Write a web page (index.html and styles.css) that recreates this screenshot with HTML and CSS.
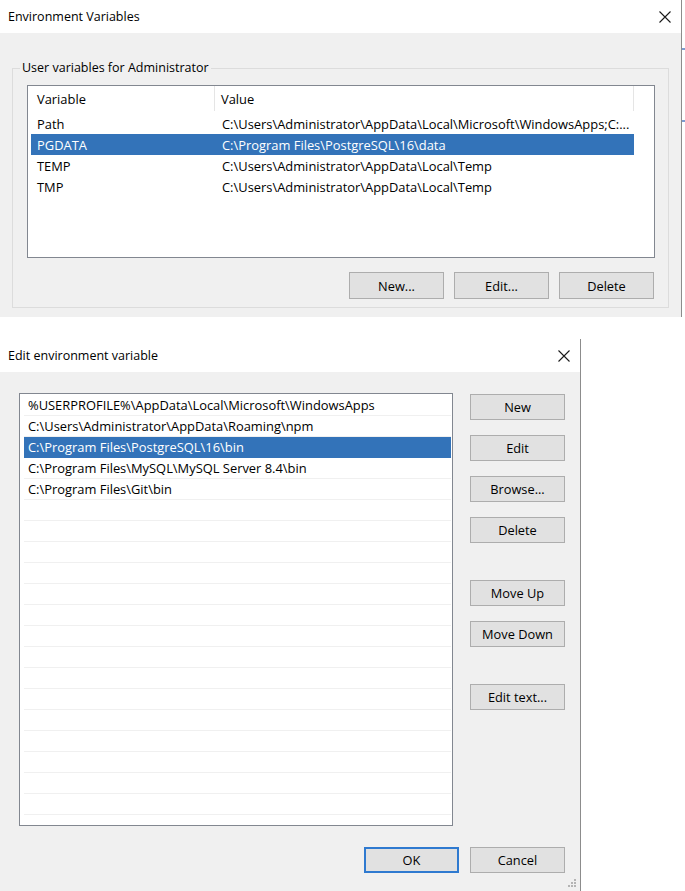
FILE: index.html
```html
<!DOCTYPE html>
<html lang="en">
<head>
<meta charset="utf-8">
<title>Environment Variables</title>
<link rel="stylesheet" href="styles.css">
</head>
<body>
<div class="screen">
  <div class="top-area">
    <section class="dlg dlg-env">
      <header class="titlebar">
        <span class="title">Environment Variables</span>
        <svg class="close" width="12" height="12" viewBox="0 0 12 12"><path d="M0.5 0.5 L11.5 11.5 M11.5 0.5 L0.5 11.5" stroke="#1a1a1a" stroke-width="1.1" fill="none"/></svg>
      </header>
      <div class="dlg-body env-body">
        <fieldset class="group">
          <legend>User variables for Administrator</legend>
          <div class="listview">
            <div class="lv-head">
              <div class="lv-col col-var">Variable</div>
              <div class="lv-col col-val">Value</div>
              <div class="lv-col col-rest"></div>
            </div>
            <div class="lv-row"><span class="col-var">Path</span><span class="col-val">C:\Users\Administrator\AppData\Local\Microsoft\WindowsApps;C:...</span></div>
            <div class="lv-row selected"><span class="col-var">PGDATA</span><span class="col-val">C:\Program Files\PostgreSQL\16\data</span></div>
            <div class="lv-row"><span class="col-var">TEMP</span><span class="col-val">C:\Users\Administrator\AppData\Local\Temp</span></div>
            <div class="lv-row"><span class="col-var">TMP</span><span class="col-val">C:\Users\Administrator\AppData\Local\Temp</span></div>
          </div>
          <div class="btn-row">
            <button class="btn">New...</button>
            <button class="btn">Edit...</button>
            <button class="btn">Delete</button>
          </div>
        </fieldset>
      </div>
    </section>
    <div class="bg-window">
      <span class="mark mark-1"></span>
      <span class="mark mark-2"></span>
    </div>
  </div>

  <section class="dlg dlg-edit">
    <header class="titlebar">
      <span class="title">Edit environment variable</span>
      <svg class="close" width="12" height="12" viewBox="0 0 12 12"><path d="M0.5 0.5 L11.5 11.5 M11.5 0.5 L0.5 11.5" stroke="#1a1a1a" stroke-width="1.1" fill="none"/></svg>
    </header>
    <div class="dlg-body edit-body">
      <div class="listbox">
        <div class="lb-row">%USERPROFILE%\AppData\Local\Microsoft\WindowsApps</div>
        <div class="lb-row">C:\Users\Administrator\AppData\Roaming\npm</div>
        <div class="lb-row selected">C:\Program Files\PostgreSQL\16\bin</div>
        <div class="lb-row">C:\Program Files\MySQL\MySQL Server 8.4\bin</div>
        <div class="lb-row">C:\Program Files\Git\bin</div>
        <div class="lb-row"></div>
        <div class="lb-row"></div>
        <div class="lb-row"></div>
        <div class="lb-row"></div>
        <div class="lb-row"></div>
        <div class="lb-row"></div>
        <div class="lb-row"></div>
        <div class="lb-row"></div>
        <div class="lb-row"></div>
        <div class="lb-row"></div>
        <div class="lb-row"></div>
        <div class="lb-row"></div>
        <div class="lb-row"></div>
        <div class="lb-row"></div>
        <div class="lb-row"></div>
        <div class="lb-row"></div>
      </div>
      <div class="side-buttons">
        <button class="btn">New</button>
        <button class="btn">Edit</button>
        <button class="btn">Browse...</button>
        <button class="btn">Delete</button>
        <button class="btn gap-before">Move Up</button>
        <button class="btn">Move Down</button>
        <button class="btn gap-before">Edit text...</button>
      </div>
      <div class="footer">
        <button class="btn btn-default">OK</button>
        <button class="btn">Cancel</button>
      </div>
      <svg class="grip" width="10" height="10" viewBox="0 0 10 10">
        <rect x="7" y="1" width="2" height="2" fill="#b4b4b4"/>
        <rect x="4" y="4" width="2" height="2" fill="#b4b4b4"/>
        <rect x="7" y="4" width="2" height="2" fill="#b4b4b4"/>
        <rect x="1" y="7" width="2" height="2" fill="#b4b4b4"/>
        <rect x="4" y="7" width="2" height="2" fill="#b4b4b4"/>
        <rect x="7" y="7" width="2" height="2" fill="#b4b4b4"/>
      </svg>
    </div>
  </section>
</div>
</body>
</html>
```

FILE: styles.css
```css
* { box-sizing: border-box; }

html, body {
  margin: 0;
  padding: 0;
  background: #ffffff;
}

body {
  font-family: "Open Sans", "Noto Sans", "Liberation Sans", sans-serif;
  font-size: 12.9px;
  color: #000000;
}

.screen {
  width: 685px;
  height: 891px;
  overflow: hidden;
  background: #ffffff;
  display: flex;
  flex-direction: column;
}

.top-area {
  display: flex;
  height: 317px;
}

.dlg {
  background: #ffffff;
  display: flex;
  flex-direction: column;
}

.dlg-env {
  width: 682px;
  height: 317px;
  border-right: 1px solid #8c8c8c;
}

.bg-window {
  flex: 1;
  display: flex;
  flex-direction: column;
  padding-top: 48px;
  gap: 70px;
}

.mark {
  display: block;
  width: 3px;
  height: 2px;
  background: #7d9bd0;
}

.titlebar {
  height: 33px;
  flex: none;
  display: flex;
  align-items: center;
  justify-content: space-between;
  padding: 0 10px 0 8px;
  background: #ffffff;
}

.title {
  font-size: 12.5px;
  color: #000;
}

.close {
  display: block;
}

.dlg-body {
  background: #f0f0f0;
  flex: 1;
}

.env-body {
  padding: 27px 13px 0 12px;
}

.group {
  margin: 0;
  border: 1px solid #dcdcdc;
  padding: 9px 13px 8px 14px;
  width: 657px;
}

.group legend {
  padding: 0 2px;
  margin-left: -7px;
  font-size: 12.5px;
  line-height: 16px;
}

.listview {
  height: 173px;
  width: 628px;
  border: 1px solid #828790;
  background: #ffffff;
  padding: 0 0 0 3px;
}

.lv-head {
  display: flex;
  height: 25px;
  margin-bottom: 2px;
}

.lv-col {
  display: flex;
  align-items: center;
  padding-left: 6px;
  border-right: 1px solid #e5e5e5;
}

.lv-head .col-var { width: 184px; }
.lv-head .col-val { width: 419px; }
.lv-head .col-rest { width: 20px; border-right: none; }

.lv-row {
  display: flex;
  height: 21px;
  align-items: center;
  width: 603px;
}

.lv-row .col-var {
  width: 184px;
  padding-left: 6px;
}

.lv-row .col-val {
  padding-left: 7px;
  white-space: nowrap;
}

.selected {
  background: #3373b9;
  color: #ffffff;
}

.btn-row {
  display: flex;
  justify-content: flex-end;
  gap: 10px;
  margin-top: 14px;
  width: 627px;
}

.btn {
  width: 95px;
  height: 27px;
  padding: 0;
  margin: 0;
  font-family: inherit;
  font-size: 12.8px;
  color: #000;
  background: #e1e1e1;
  border: 1px solid #adadad;
  border-radius: 0;
}

/* bottom dialog */
.dlg-edit {
  margin-top: 22px;
  width: 581px;
  flex: 1;
  border-right: 1px solid #8c8c8c;
}

.edit-body {
  display: grid;
  grid-template-columns: 434px 95px;
  grid-template-rows: auto auto;
  column-gap: 17px;
  padding: 21px 0 0 19px;
  align-content: start;
  position: relative;
}

.listbox {
  height: 433px;
  border: 1px solid #828790;
  background: #ffffff;
  padding: 1px 1px 0 4px;
  overflow: hidden;
}

.lb-row {
  height: 21px;
  border-bottom: 1px solid #f0f0f0;
  padding-left: 4px;
  line-height: 20px;
  white-space: nowrap;
}

.lb-row.selected {
  border-bottom-color: #3373b9;
}

.side-buttons {
  display: flex;
  flex-direction: column;
  gap: 15px;
  padding-top: 1px;
}

.side-buttons .btn {
  height: 26px;
}

.side-buttons .gap-before {
  margin-top: 22px;
}

.footer {
  grid-column: 1 / 3;
  display: flex;
  justify-content: flex-end;
  gap: 11px;
  margin-top: 21px;
}

.footer .btn {
  height: 26px;
}

.btn-default {
  border: 2px solid #2f7ad0;
}

.grip {
  position: absolute;
  right: 3px;
  bottom: 3px;
}
```
